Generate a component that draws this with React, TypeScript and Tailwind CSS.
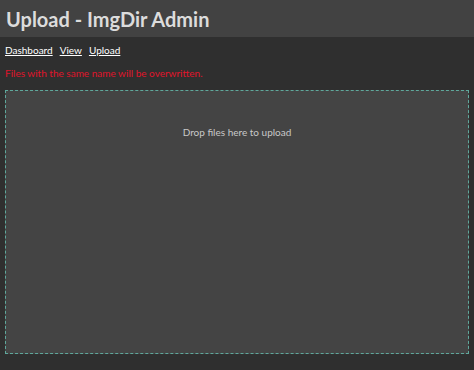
export default function App() {
  return (
    <div className="min-h-[370px] w-full bg-[#2f2f2f] font-['Lato',sans-serif]">
      <div className="h-[37px] bg-[#424242] px-[6px] flex items-center">
        <h1 className="text-[20px] font-bold leading-none text-[#dcdcdc]">Upload - ImgDir Admin</h1>
      </div>
      <nav className="flex gap-[7px] px-[5px] pt-[6px] text-[10px] leading-[14px] text-white">
        <a className="underline" href="#">Dashboard</a>
        <a className="underline" href="#">View</a>
        <a className="underline" href="#">Upload</a>
      </nav>
      <p className="px-[5px] pt-[9px] text-[10px] leading-[14px] text-[#e0142b]">Files with the same name will be overwritten.</p>
      <div className="mx-[5px] mt-[10px] h-[264px] border border-dashed border-[#5fa89c] bg-[#444444] flex justify-center pt-[34px]">
        <span className="text-[10px] leading-[14px] text-[#c8c8c8]">Drop files here to upload</span>
      </div>
    </div>
  );
}
